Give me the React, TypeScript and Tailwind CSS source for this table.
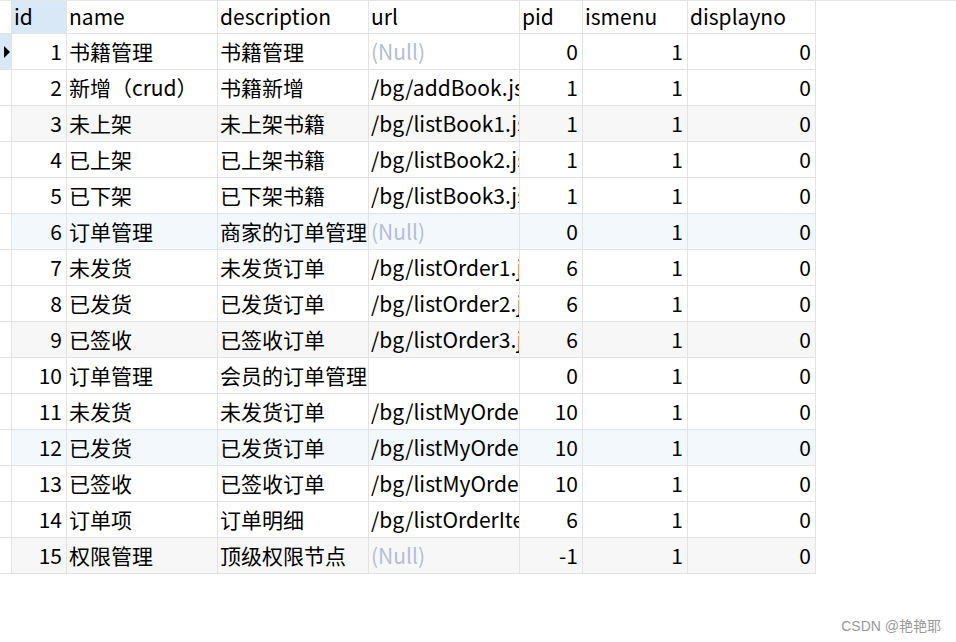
import type { ReactNode } from 'react';

type Row = {
    id: number;
    name: string;
    description: string;
    url: string | null;
    pid: number;
    ismenu: number;
    displayno: number;
};

const rows: Row[] = [
    { id: 1, name: '书籍管理', description: '书籍管理', url: null, pid: 0, ismenu: 1, displayno: 0 },
    { id: 2, name: '新增（crud）', description: '书籍新增', url: '/bg/addBook.jsp', pid: 1, ismenu: 1, displayno: 0 },
    { id: 3, name: '未上架', description: '未上架书籍', url: '/bg/listBook1.jsp', pid: 1, ismenu: 1, displayno: 0 },
    { id: 4, name: '已上架', description: '已上架书籍', url: '/bg/listBook2.jsp', pid: 1, ismenu: 1, displayno: 0 },
    { id: 5, name: '已下架', description: '已下架书籍', url: '/bg/listBook3.jsp', pid: 1, ismenu: 1, displayno: 0 },
    { id: 6, name: '订单管理', description: '商家的订单管理', url: null, pid: 0, ismenu: 1, displayno: 0 },
    { id: 7, name: '未发货', description: '未发货订单', url: '/bg/listOrder1.jsp', pid: 6, ismenu: 1, displayno: 0 },
    { id: 8, name: '已发货', description: '已发货订单', url: '/bg/listOrder2.jsp', pid: 6, ismenu: 1, displayno: 0 },
    { id: 9, name: '已签收', description: '已签收订单', url: '/bg/listOrder3.jsp', pid: 6, ismenu: 1, displayno: 0 },
    { id: 10, name: '订单管理', description: '会员的订单管理', url: '', pid: 0, ismenu: 1, displayno: 0 },
    { id: 11, name: '未发货', description: '未发货订单', url: '/bg/listMyOrder1.jsp', pid: 10, ismenu: 1, displayno: 0 },
    { id: 12, name: '已发货', description: '已发货订单', url: '/bg/listMyOrder2.jsp', pid: 10, ismenu: 1, displayno: 0 },
    { id: 13, name: '已签收', description: '已签收订单', url: '/bg/listMyOrder3.jsp', pid: 10, ismenu: 1, displayno: 0 },
    { id: 14, name: '订单项', description: '订单明细', url: '/bg/listOrderItem.jsp', pid: 6, ismenu: 1, displayno: 0 },
    { id: 15, name: '权限管理', description: '顶级权限节点', url: null, pid: -1, ismenu: 1, displayno: 0 },
];

const headers = ['id', 'name', 'description', 'url', 'pid', 'ismenu', 'displayno'];

function rowBg(i: number) {
    // every third row is shaded, alternating gray / pale blue
    if (i % 6 === 2) return 'bg-[#f7f7f7]';
    if (i % 6 === 5) return 'bg-[#f3f8fd]';
    return 'bg-white';
}

function Cell({ children, right, className = '' }: { children?: ReactNode; right?: boolean; className?: string }) {
    return (
        <div
            className={`flex h-[36px] items-center overflow-hidden whitespace-nowrap border-r border-b border-[#e3e3e3] ${
                right ? 'justify-end pr-[4px]' : 'pl-[2px]'
            } ${className}`}
        >
            {children}
        </div>
    );
}

export default function App() {
    return (
        <div
            className="relative h-[642px] w-[956px] overflow-hidden border-t border-[#e6e6e6] bg-white text-[21px] text-black"
            style={{ fontFamily: '"Noto Sans CJK SC", "Noto Sans", sans-serif' }}
        >
            <div className="grid w-[816px] grid-cols-[12px_55px_151px_151px_151px_63px_105px_128px]">
                {/* header */}
                <div className="h-[33px] border-r border-b border-[#e3e3e3] bg-white" />
                {headers.map((h, i) => (
                    <div
                        key={h}
                        className={`flex h-[33px] items-center border-r border-b border-[#e3e3e3] pl-[2px] ${
                            i === 0 ? 'bg-[#d9e8f7]' : 'bg-white'
                        }`}
                    >
                        {h}
                    </div>
                ))}

                {rows.map((r, i) => {
                    const bg = rowBg(i);
                    return (
                        <div key={r.id} className="contents">
                            <Cell className={i === 0 ? 'bg-[#d9e8f7] pl-[4px]' : 'bg-white'}>
                                {i === 0 && (
                                    <svg width="6" height="12" viewBox="0 0 6 12">
                                        <path d="M0 0 L6 6 L0 12 Z" fill="#000" />
                                    </svg>
                                )}
                            </Cell>
                            <Cell right className={bg}>{r.id}</Cell>
                            <Cell className={bg}>{r.name}</Cell>
                            <Cell className={bg}>{r.description}</Cell>
                            <Cell className={bg}>
                                {r.url === null ? <span className="text-[#b5bdd6]">(Null)</span> : r.url}
                            </Cell>
                            <Cell right className={bg}>{r.pid}</Cell>
                            <Cell right className={bg}>{r.ismenu}</Cell>
                            <Cell right className={bg}>{r.displayno}</Cell>
                        </div>
                    );
                })}
            </div>

            <div
                className="absolute right-[15px] bottom-[5px] text-[14px] text-[#999999]"
                style={{ fontFamily: '"Liberation Sans", "Noto Sans CJK SC", sans-serif' }}
            >
                CSDN @艳艳耶
            </div>
        </div>
    );
}
